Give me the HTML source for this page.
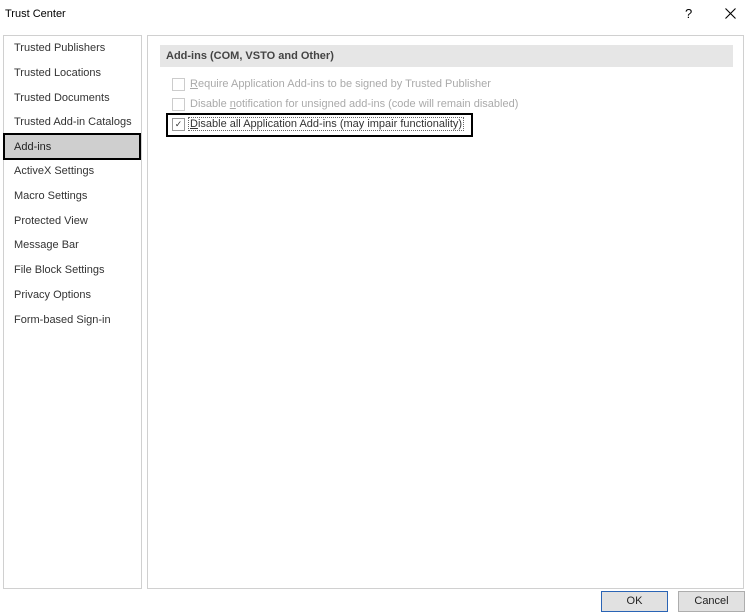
<!DOCTYPE html><html><head><style>
body{margin:0;width:750px;height:616px;background:#fff;font-family:"Liberation Sans",sans-serif;font-size:11px;color:#333;position:relative;overflow:hidden}
.a{position:absolute;white-space:nowrap}
.nav{left:14px}
.cb{position:absolute;width:11px;height:11px;border:1px solid #ccc;background:#fff}
</style></head><body>
<div class="a" style="left:5px;top:8px;color:#000">Trust Center</div>
<div class="a" style="left:685px;top:6px;font-size:13px;color:#000">?</div>
<svg class="a" style="left:725px;top:8px" width="11" height="11"><path d="M0.5 0.5L10.5 10.5M10.5 0.5L0.5 10.5" stroke="#000" stroke-width="1.1"/></svg>
<div class="a" style="left:3px;top:35px;width:137px;height:552px;border:1px solid #d0d0d0"></div>
<div class="a" style="left:147px;top:35px;width:595px;height:552px;border:1px solid #d0d0d0"></div>
<div class="a" style="left:3px;top:133px;width:134px;height:23px;background:#cfcfcf;border:2px solid #000"></div>
<div class="a nav" style="top:42px">Trusted Publishers</div>
<div class="a nav" style="top:67px">Trusted Locations</div>
<div class="a nav" style="top:92px">Trusted Documents</div>
<div class="a nav" style="top:116px">Trusted Add-in Catalogs</div>
<div class="a nav" style="top:141px;color:#222">Add-ins</div>
<div class="a nav" style="top:165px">ActiveX Settings</div>
<div class="a nav" style="top:190px">Macro Settings</div>
<div class="a nav" style="top:215px">Protected View</div>
<div class="a nav" style="top:239px">Message Bar</div>
<div class="a nav" style="top:264px">File Block Settings</div>
<div class="a nav" style="top:289px">Privacy Options</div>
<div class="a nav" style="top:314px">Form-based Sign-in</div>
<div class="a" style="left:160px;top:45px;width:573px;height:22px;background:#e6e6e6"></div>
<div class="a" style="left:166px;top:50px;font-weight:bold;color:#444">Add-ins (COM, VSTO and Other)</div>
<div class="cb" style="left:172px;top:78px"></div>
<div class="a" style="left:190px;top:78px;color:#aaa"><u>R</u>equire Application Add-ins to be signed by Trusted Publisher</div>
<div class="cb" style="left:172px;top:98px"></div>
<div class="a" style="left:190px;top:98px;color:#aaa">Disable <u>n</u>otification for unsigned add-ins (code will remain disabled)</div>
<div class="a" style="left:166px;top:113px;width:303px;height:20px;border:2px solid #000"></div>
<div class="cb" style="left:172px;top:118px;border-color:#999;font-size:9px;line-height:11px;text-align:center;color:#333">✓</div>
<div class="a" style="left:188px;top:117px;color:#333;border:1px dotted #666;padding:0 1px"><u>D</u>isable all Application Add-ins (may impair functionality)</div>
<div class="a" style="left:601px;top:591px;width:65px;height:19px;border:1px solid #2a64b5;background:#e1e1e1;text-align:center;line-height:19px;color:#222">OK</div>
<div class="a" style="left:678px;top:591px;width:65px;height:19px;border:1px solid #adadad;background:#e1e1e1;text-align:center;line-height:19px;color:#222">Cancel</div>
</body></html>
